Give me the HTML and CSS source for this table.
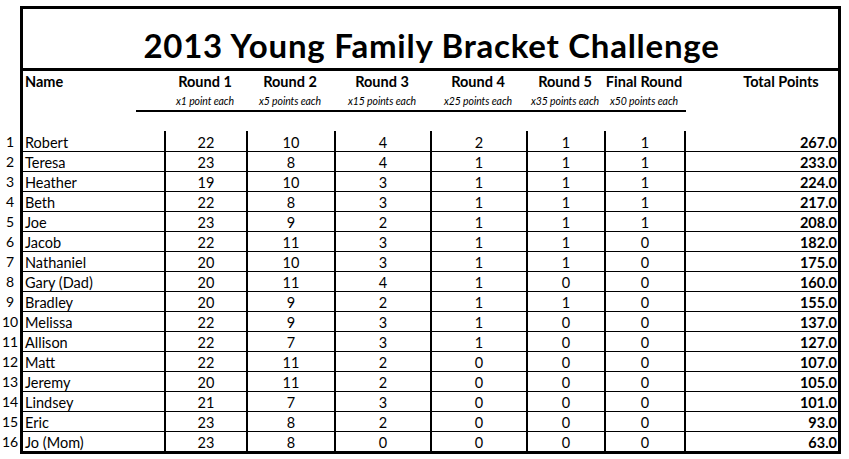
FILE: index.html
```html
<!DOCTYPE html>
<html>
<head>
<meta charset="utf-8">
<link rel="stylesheet" href="styles.css">
</head>
<body>
<div class="page">
  <div class="rownums">
    <div class="rn">1</div><div class="rn">2</div><div class="rn">3</div><div class="rn">4</div>
    <div class="rn">5</div><div class="rn">6</div><div class="rn">7</div><div class="rn">8</div>
    <div class="rn">9</div><div class="rn">10</div><div class="rn">11</div><div class="rn">12</div>
    <div class="rn">13</div><div class="rn">14</div><div class="rn">15</div><div class="rn">16</div>
  </div>
  <div class="sheet">
    <div class="title">2013 Young Family Bracket Challenge</div>
    <div class="head">
      <div class="hrow">
        <div class="hc name">Name</div>
        <div class="hc">Round 1</div>
        <div class="hc">Round 2</div>
        <div class="hc">Round 3</div>
        <div class="hc">Round 4</div>
        <div class="hc">Round 5</div>
        <div class="hc">Final Round</div>
        <div class="hc total">Total Points</div>
      </div>
      <div class="hrow sub">
        <div class="sc"></div>
        <div class="sc">x1 point each</div>
        <div class="sc">x5 points each</div>
        <div class="sc">x15 points each</div>
        <div class="sc">x25 points each</div>
        <div class="sc">x35 points each</div>
        <div class="sc">x50 points each</div>
        <div class="sc"></div>
      </div>
      <div class="underline"></div>
    </div>
    <div class="body">
      <div class="row"><div class="c name">Robert</div><div class="c">22</div><div class="c">10</div><div class="c">4</div><div class="c">2</div><div class="c">1</div><div class="c">1</div><div class="c tot">267.0</div></div>
      <div class="row"><div class="c name">Teresa</div><div class="c">23</div><div class="c">8</div><div class="c">4</div><div class="c">1</div><div class="c">1</div><div class="c">1</div><div class="c tot">233.0</div></div>
      <div class="row"><div class="c name">Heather</div><div class="c">19</div><div class="c">10</div><div class="c">3</div><div class="c">1</div><div class="c">1</div><div class="c">1</div><div class="c tot">224.0</div></div>
      <div class="row"><div class="c name">Beth</div><div class="c">22</div><div class="c">8</div><div class="c">3</div><div class="c">1</div><div class="c">1</div><div class="c">1</div><div class="c tot">217.0</div></div>
      <div class="row"><div class="c name">Joe</div><div class="c">23</div><div class="c">9</div><div class="c">2</div><div class="c">1</div><div class="c">1</div><div class="c">1</div><div class="c tot">208.0</div></div>
      <div class="row"><div class="c name">Jacob</div><div class="c">22</div><div class="c">11</div><div class="c">3</div><div class="c">1</div><div class="c">1</div><div class="c">0</div><div class="c tot">182.0</div></div>
      <div class="row"><div class="c name">Nathaniel</div><div class="c">20</div><div class="c">10</div><div class="c">3</div><div class="c">1</div><div class="c">1</div><div class="c">0</div><div class="c tot">175.0</div></div>
      <div class="row"><div class="c name">Gary (Dad)</div><div class="c">20</div><div class="c">11</div><div class="c">4</div><div class="c">1</div><div class="c">0</div><div class="c">0</div><div class="c tot">160.0</div></div>
      <div class="row"><div class="c name">Bradley</div><div class="c">20</div><div class="c">9</div><div class="c">2</div><div class="c">1</div><div class="c">1</div><div class="c">0</div><div class="c tot">155.0</div></div>
      <div class="row"><div class="c name">Melissa</div><div class="c">22</div><div class="c">9</div><div class="c">3</div><div class="c">1</div><div class="c">0</div><div class="c">0</div><div class="c tot">137.0</div></div>
      <div class="row"><div class="c name">Allison</div><div class="c">22</div><div class="c">7</div><div class="c">3</div><div class="c">1</div><div class="c">0</div><div class="c">0</div><div class="c tot">127.0</div></div>
      <div class="row"><div class="c name">Matt</div><div class="c">22</div><div class="c">11</div><div class="c">2</div><div class="c">0</div><div class="c">0</div><div class="c">0</div><div class="c tot">107.0</div></div>
      <div class="row"><div class="c name">Jeremy</div><div class="c">20</div><div class="c">11</div><div class="c">2</div><div class="c">0</div><div class="c">0</div><div class="c">0</div><div class="c tot">105.0</div></div>
      <div class="row"><div class="c name">Lindsey</div><div class="c">21</div><div class="c">7</div><div class="c">3</div><div class="c">0</div><div class="c">0</div><div class="c">0</div><div class="c tot">101.0</div></div>
      <div class="row"><div class="c name">Eric</div><div class="c">23</div><div class="c">8</div><div class="c">2</div><div class="c">0</div><div class="c">0</div><div class="c">0</div><div class="c tot">93.0</div></div>
      <div class="row"><div class="c name">Jo (Mom)</div><div class="c">23</div><div class="c">8</div><div class="c">0</div><div class="c">0</div><div class="c">0</div><div class="c">0</div><div class="c tot">63.0</div></div>
    </div>
  </div>
</div>
</body>
</html>
```

FILE: styles.css
```css
* { box-sizing: border-box; }
html, body { margin: 0; padding: 0; background: #fff; }
body {
  font-family: Lato, "Liberation Sans", sans-serif;
  color: #000;
  font-size: 14.5px;
}
.page {
  display: flex;
  padding-top: 6px;
}
.rownums {
  width: 20px;
  padding-top: 125px;
  display: flex;
  flex-direction: column;
}
.rn {
  height: 20px;
  line-height: 22px;
  text-align: center;
  font-size: 14px;
}
.sheet {
  width: 821px;
  border: 3px solid #000;
}
.title {
  height: 62px;
  border-bottom: 3px solid #000;
  text-align: center;
  font-weight: 700;
  font-size: 33px;
  line-height: 33px;
  letter-spacing: 0.75px;
  padding-top: 20px;
  padding-left: 2px;
  white-space: nowrap;
}
.head {
  height: 60px;
  display: flex;
  flex-direction: column;
}
.hrow {
  display: grid;
  grid-template-columns: 141px 82px 88px 96px 96px 78px 80px 154px;
}
.hc {
  font-weight: 700;
  text-align: center;
  height: 21px;
  line-height: 21px;
}
.hc.name { text-align: left; padding-left: 2px; }
.hc.total { padding-left: 40px; }
.sub { height: 18px; }
.sc {
  font-style: italic;
  font-size: 10.5px;
  text-align: center;
  line-height: 19px;
  letter-spacing: -0.1px;
  white-space: nowrap;
}
.underline {
  margin-left: 113px;
  width: 550px;
  height: 2px;
  background: #000;
}
.row {
  display: grid;
  grid-template-columns: 141px 82px 88px 96px 96px 78px 80px 154px;
  height: 20px;
  border-top: 1px solid #000;
}
.row:first-child { border-top: none; }
.c {
  border-left: 2px solid #000;
  text-align: center;
  line-height: 21px;
  padding-top: 1px;
  white-space: nowrap;
}
.row:not(:first-child) .c { line-height: 19px; }
.c.name {
  border-left: none;
  text-align: left;
  padding-left: 2px;
}
.c.tot {
  text-align: right;
  font-weight: 700;
  padding-right: 1px;
}
```
